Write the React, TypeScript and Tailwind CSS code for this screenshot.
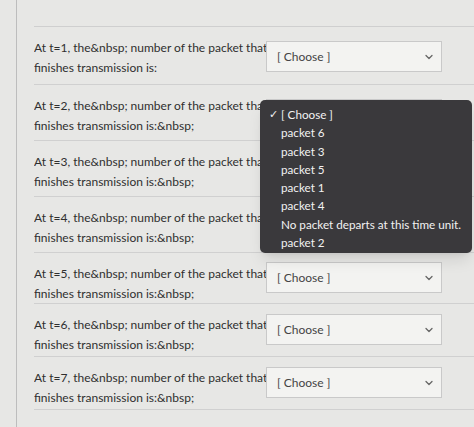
import React from "react";

const rows = [
  { t: 1, h: "h-[58px]", nb: false, sel: "mt-[14px]" },
  { t: 2, h: "h-[56px]", nb: true, sel: "mt-[14px]" },
  { t: 3, h: "h-[56px]", nb: true, sel: "mt-[14px]" },
  { t: 4, h: "h-[56px]", nb: true, sel: "mt-[14px]" },
  { t: 5, h: "h-[51px]", nb: true, sel: "mt-[9px]" },
  { t: 6, h: "h-[53px]", nb: true, sel: "mt-[10px]" },
  { t: 7, h: "h-[53px]", nb: true, sel: "mt-[10px]" },
];

const options = [
  "packet 6",
  "packet 3",
  "packet 5",
  "packet 1",
  "packet 4",
  "No packet departs at this time unit.",
  "packet 2",
];

function Chevron() {
  return (
    <svg width="10" height="10" viewBox="0 0 10 10" className="text-[#666]">
      <path d="M2 3.5 L5 6.5 L8 3.5" fill="none" stroke="currentColor" strokeWidth="1.3" strokeLinecap="round" strokeLinejoin="round" />
    </svg>
  );
}

export default function App() {
  return (
    <div
      className="relative w-[474px] h-[427px] overflow-hidden bg-[#e7e7e5] text-[#2f2f2f]"
      style={{ fontFamily: "Lato, 'Open Sans', sans-serif" }}
    >
      <div className="ml-[16px] h-full border-l border-[#bdbdbd] pl-[17px] pt-[26px]">
        <div className="border-t border-[#cfcfcf]">
          {rows.map((r) => (
            <div key={r.t} className={`${r.h} flex items-start border-b border-[#d0d0d0]`}>
              <div className="w-[232px] shrink-0 pt-[11px] text-[12px] leading-[20px] whitespace-nowrap overflow-hidden">
                <div>At t={r.t}, the&amp;nbsp; number of the packet that</div>
                <div>finishes transmission is:{r.nb ? "&nbsp;" : ""}</div>
              </div>
              <div className={`${r.sel} w-[176px] h-[31px] flex items-center justify-between border border-[#c9c9c9] bg-[#f3f3f1] pl-[10px] pr-[7px] text-[12px] text-[#444]`}>
                <span>[ Choose ]</span>
                <Chevron />
              </div>
            </div>
          ))}
        </div>
      </div>

      <div className="absolute left-[260px] top-[100px] w-[212px] h-[153px] rounded-[5px] bg-[#3a393c] pt-[5px] text-[11.7px] leading-[18.3px] text-[#f2f2f2] shadow-lg">
        <div className="flex items-center pl-[9px]">
          <span className="w-[12px] text-[11px]">✓</span>
          <span>[ Choose ]</span>
        </div>
        {options.map((o) => (
          <div key={o} className="pl-[21px] whitespace-nowrap">
            {o}
          </div>
        ))}
      </div>
    </div>
  );
}
